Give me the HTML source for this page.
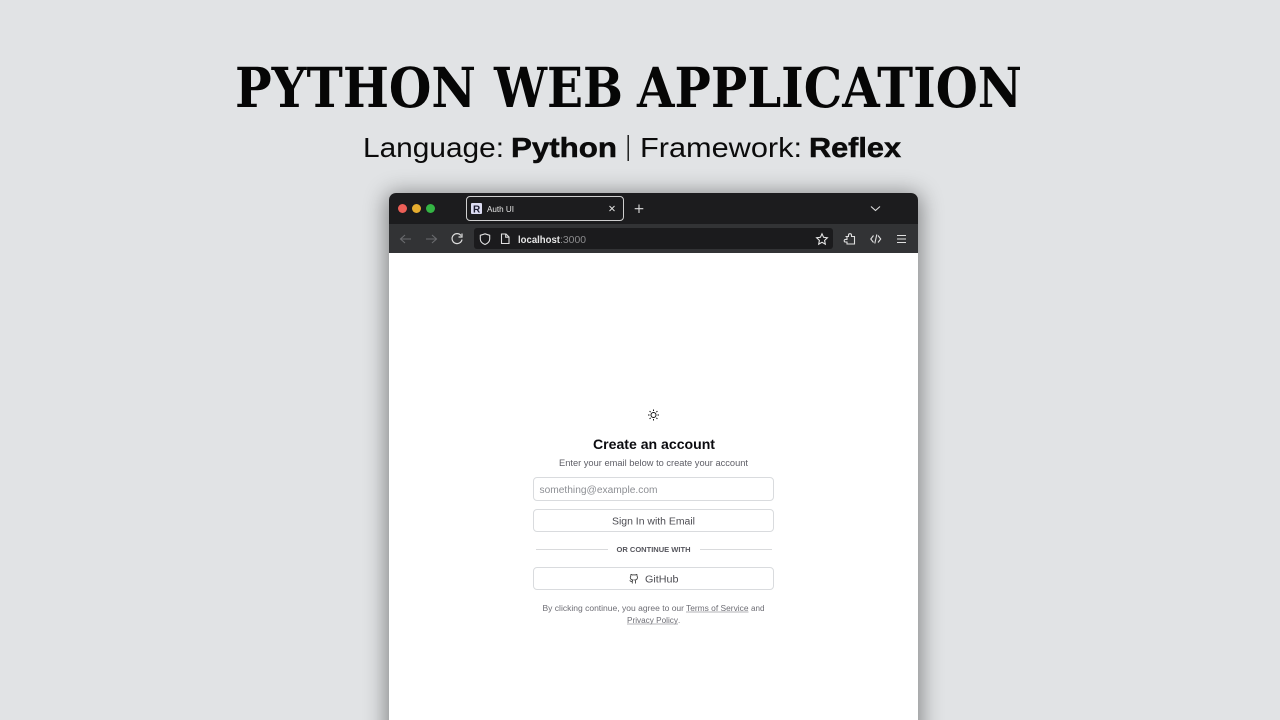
<!DOCTYPE html>
<html><head><meta charset="utf-8"><style>
*{box-sizing:border-box}
html,body{margin:0;padding:0;width:1280px;height:720px;overflow:hidden;background:#e1e3e5}
.a{position:absolute}
#clip{left:0;top:0;width:1280px;height:720px;overflow:hidden;background:#e1e3e5}
#win{left:389px;top:193px;width:529px;height:560px;border-radius:7px 7px 0 0;background:#fff;box-shadow:0 3px 22px 3px rgba(0,0,0,.42);overflow:hidden}
#tabs{left:0;top:0;width:529px;height:31px;background:#1c1c1e}
#bar{left:0;top:31px;width:529px;height:29px;background:#323335}
#tab{left:77px;top:3px;width:158px;height:25px;border:1px solid #cfcfcf;border-radius:4px;background:#1c1c1e}
#url{left:85px;top:35px;width:359px;height:21px;background:#1b1b1d;border-radius:3px}
.dot{width:9px;height:9px;border-radius:50%;top:11px}
.box{left:533px;width:241px;height:24px;border:1px solid #d9dbde;border-radius:4px;background:#fff}
svg{position:absolute;left:0;top:0}
text{font-family:"Liberation Sans",sans-serif}
</style></head><body>
<div class="a" id="clip">
<div class="a" id="win">
<div class="a" id="tabs"></div><div class="a" id="bar"></div><div class="a" id="tab"></div><div class="a" id="url"></div>
<div class="a dot" style="left:9px;background:#ec5f57"></div>
<div class="a dot" style="left:23px;background:#e6ad2f"></div>
<div class="a dot" style="left:37px;background:#34b544"></div>
</div>
<div class="a box" style="top:477px;height:24px"></div>
<div class="a box" style="top:509px;height:23px"></div>
<div class="a box" style="top:567px;height:23px"></div>
<svg width="1280" height="720" viewBox="0 0 1280 720">
<g style="font-size:55px;fill:#060606">
<text x="235" y="107" textLength="241" lengthAdjust="spacingAndGlyphs" style="font-family:'DejaVu Serif',serif;font-weight:700">PYTHON</text>
<text x="494" y="107" textLength="129" lengthAdjust="spacingAndGlyphs" style="font-family:'DejaVu Serif',serif;font-weight:700">WEB</text>
<text x="637" y="107" textLength="385" lengthAdjust="spacingAndGlyphs" style="font-family:'DejaVu Serif',serif;font-weight:700">APPLICATION</text>
</g>
<g style="font-size:28px;fill:#0b0b0b">
<text x="363" y="157" textLength="141" lengthAdjust="spacingAndGlyphs">Language:</text>
<text x="511" y="157" textLength="106" lengthAdjust="spacingAndGlyphs" font-weight="700" stroke="#0b0b0b" stroke-width=".5">Python</text>
<rect x="627.500" y="135" width="1.400" height="26" fill="#111"/>
<text x="640" y="157" textLength="162" lengthAdjust="spacingAndGlyphs">Framework:</text>
<text x="809" y="157" textLength="92" lengthAdjust="spacingAndGlyphs" font-weight="700" stroke="#0b0b0b" stroke-width=".5">Reflex</text>
</g>
<!-- tab -->
<rect x="471" y="203" width="11" height="11" rx="1" fill="#dcdcf2"/>
<text x="473" y="212.500" style="font-size:10px;font-weight:700;fill:#1c1c30">R</text>
<text x="487" y="212" textLength="27" lengthAdjust="spacingAndGlyphs" style="font-size:8.500px;fill:#e8e8e8">Auth UI</text>
<path d="M609.500 206l5 5M614.500 206l-5 5" stroke="#ddd" stroke-width="1" fill="none"/>
<path d="M639 204.500v8.500M634.700 208.700h8.600" stroke="#ddd" stroke-width="1.100" fill="none"/>
<path d="M871 206.500l4.500 4 4.500-4" stroke="#ddd" stroke-width="1.100" fill="none"/>
<!-- nav -->
<path d="M411 239h-10M405 235l-4.500 4 4.500 4" stroke="#6a6b6e" stroke-width="1.100" fill="none"/>
<path d="M426 239h10M432 235l4.500 4-4.500 4" stroke="#6a6b6e" stroke-width="1.100" fill="none"/>
<path d="M461 235.500a5 5 0 1 0 1 4M462 233.500v3.500h-3.500" stroke="#ddd" stroke-width="1.200" fill="none"/>
<path d="M485 233.800l4.700 1.500v3.700c0 2.800-2.200 4.500-4.700 5.500-2.500-1-4.700-2.700-4.700-5.500v-3.700z" stroke="#e0e0e0" stroke-width="1.100" fill="none"/>
<path d="M501.500 234h4.500l3 3v6.500h-7.500zM505.700 234v3.200h3.300" stroke="#e0e0e0" stroke-width="1.100" fill="none"/>
<text x="518" y="243" style="font-size:10px;font-weight:700;fill:#e6e6e6" textLength="42" lengthAdjust="spacingAndGlyphs">localhost</text>
<text x="560" y="243" style="font-size:10px;fill:#8c8c8e" textLength="26" lengthAdjust="spacingAndGlyphs">:3000</text>
<path d="M822 233.800l1.600 3.500 3.800.5-2.800 2.600.7 3.800-3.300-1.900-3.300 1.900.7-3.800-2.800-2.600 3.800-.5z" stroke="#e6e6e6" stroke-width="1.100" fill="none"/>
<path d="M845.500 236.500h3v-1.300a1.500 1.500 0 0 1 3 0v1.300h3v7.500h-7.500v-2h-1.500a1.300 1.300 0 0 1 0-2.600h1.500v-2.900z" stroke="#e0e0e0" stroke-width="1.100" fill="none"/>
<path d="M873.500 235.500l-2.700 3.500 2.700 3.500M878 235.500l2.700 3.500-2.700 3.500M876.800 234.500l-2 9" stroke="#e0e0e0" stroke-width="1.100" fill="none"/>
<path d="M897 235.500h9M897 239h9M897 242.500h9" stroke="#e0e0e0" stroke-width="1.100" fill="none"/>
<!-- sun -->
<circle cx="653.500" cy="415" r="2.500" stroke="#111" stroke-width="1" fill="none"/>
<path d="M653.500 409.500v1.500M653.500 419v1.500M648 415h1.500M657.500 415h1.500M649.600 411.100l1 1M656.400 417.900l1 1M649.600 418.900l1-1M656.400 412.100l1-1" stroke="#111" stroke-width="1" fill="none"/>
<text x="593" y="449" textLength="122" lengthAdjust="spacingAndGlyphs" style="font-size:14px;font-weight:700;fill:#0b0b0f">Create an account</text>
<text x="559" y="466" textLength="189" lengthAdjust="spacingAndGlyphs" style="font-size:8.800px;fill:#5e5e66">Enter your email below to create your account</text>
<text x="539.500" y="493" textLength="118" lengthAdjust="spacingAndGlyphs" style="font-size:10px;fill:#8d8f94">something@example.com</text>
<text x="612" y="524.500" textLength="83" lengthAdjust="spacingAndGlyphs" style="font-size:10px;fill:#4d4d53">Sign In with Email</text>
<path d="M536 549.500h72M700 549.500h72" stroke="#d9dadc" stroke-width="1"/>
<text x="616.500" y="552" textLength="74" lengthAdjust="spacingAndGlyphs" style="font-size:7px;font-weight:700;fill:#55555c">OR CONTINUE WITH</text>
<path d="M635.500 583.500v-2c.1-.7-.2-1.100-.6-1.500 1.500-.2 2.600-.8 2.600-2.600 0-.6-.2-1.100-.6-1.500.2-.5.100-1.100-.1-1.500-.5 0-1.100.3-1.500.6a6 6 0 0 0-2.800 0c-.4-.3-1-.6-1.500-.6-.2.4-.3 1-.1 1.500-.4.4-.6.900-.6 1.500 0 1.800 1.100 2.400 2.600 2.600-.4.4-.6.800-.6 1.500v2M632.300 581.500c-1.500.5-1.800-.7-2.700-1" stroke="#444" stroke-width=".9" fill="none"/>
<text x="645" y="582.500" textLength="33.500" lengthAdjust="spacingAndGlyphs" style="font-size:10px;fill:#4d4d53">GitHub</text>
<g style="font-size:8px;fill:#6d6d74">
<text x="542.500" y="611" textLength="141.500" lengthAdjust="spacingAndGlyphs">By clicking continue, you agree to our</text>
<text x="686" y="611" textLength="62.500" lengthAdjust="spacingAndGlyphs">Terms of Service</text>
<text x="751" y="611" textLength="13.500" lengthAdjust="spacingAndGlyphs">and</text>
<text x="627" y="623" textLength="51" lengthAdjust="spacingAndGlyphs">Privacy Policy</text>
<text x="678" y="623">.</text>
</g>
<path d="M686 612h62.500M627 624h51" stroke="#9a9aa0" stroke-width=".8"/>
</svg>
</div>
</body></html>
